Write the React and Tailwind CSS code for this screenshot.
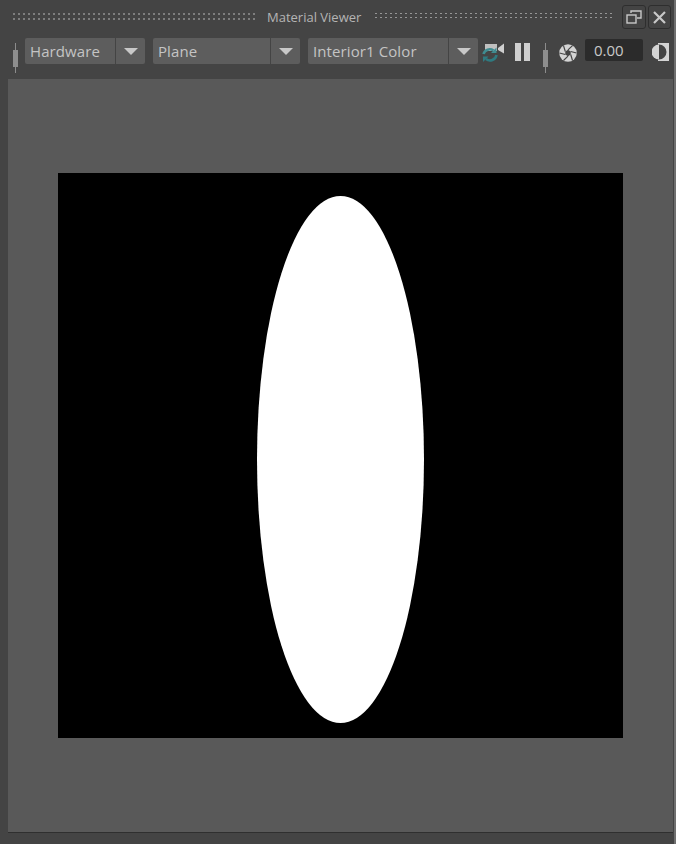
const font = 'font-["Open_Sans","Noto_Sans",sans-serif]';

function Grip({ dots, className }) {
  return (
    <div className={`flex flex-col ${className}`}>
      <div className={`${dots} bg-[length:5px_100%]`} />
      <div className={`${dots} mt-[3px] bg-[length:5px_100%]`} />
    </div>
  );
}

function Separator({ className }) {
  return (
    <div className={`relative h-[30px] w-[5px] shrink-0 ${className}`}>
      <div className="absolute left-[2px] top-0 h-full w-px bg-[#8c8c8c]" />
      <div className="absolute left-0 top-[7px] h-[17px] w-[5px] bg-[#8e8e8e]" />
    </div>
  );
}

function Combo({ label, mainWidth, className }) {
  return (
    <div className={`flex h-[26px] shrink-0 overflow-hidden rounded-[2px] ${className}`}>
      <div className={`flex items-center bg-[#5d5d5d] pl-[5px] pt-px text-[15px] tracking-[0.1px] whitespace-nowrap text-[#c4c4c4] ${mainWidth}`}>{label}</div>
      <div className="ml-px flex w-[29px] items-center justify-center bg-[#5d5d5d]">
        <svg width="14" height="7" viewBox="0 0 14 7">
          <path d="M0 0H14L7 7Z" fill="#c8c8c8" />
        </svg>
      </div>
    </div>
  );
}

function WindowButton({ children, className }) {
  return (
    <button className={`flex h-[24px] items-center justify-center rounded-[3px] border border-[#2e2e2e] ${className}`}>
      {children}
    </button>
  );
}

export default function App() {
  return (
    <div className={`flex h-[844px] w-[676px] flex-col overflow-hidden border-r-2 border-r-[#6f6f6f] bg-[#444444] ${font}`}>
      <div className="flex h-[34px] shrink-0 items-start">
        <Grip
          dots="h-[2px] bg-[linear-gradient(90deg,#7e7e7e_2px,transparent_2px)]"
          className="ml-[13px] mt-[13px] w-[243px]"
        />
        <div className="ml-[11px] mt-[8px] w-[95px] text-[13px] leading-[18px] whitespace-nowrap text-[#b4b4b4]">Material Viewer</div>
        <Grip
          dots="h-px bg-[linear-gradient(90deg,#969696_2px,transparent_2px)]"
          className="ml-[13px] mt-[13px] w-[237px]"
        />
        <WindowButton className="ml-[10px] mt-[5px] w-[24px]">
          <svg width="16" height="14" viewBox="0 0 16 14" fill="none" stroke="#c8c8c8" strokeWidth="1.4">
            <path d="M5 3V1H15V8H11" />
            <rect x="1" y="5" width="9" height="8" />
          </svg>
        </WindowButton>
        <WindowButton className="ml-[2px] mt-[5px] w-[23px]">
          <svg width="13" height="13" viewBox="0 0 13 13" stroke="#c8c8c8" strokeWidth="2.2">
            <path d="M1 1L12 12M12 1L1 12" />
          </svg>
        </WindowButton>
      </div>

      <div className="flex h-[45px] shrink-0 items-start pt-[4px]">
        <Separator className="ml-[13px] mt-[5px]" />
        <Combo label="Hardware" mainWidth="w-[90px]" className="ml-[7px]" />
        <Combo label="Plane" mainWidth="w-[117px]" className="ml-[8px]" />
        <Combo label="Interior1 Color" mainWidth="w-[140px]" className="ml-[8px]" />
        <svg className="ml-[3px] mt-[4px] shrink-0" width="24" height="21" viewBox="0 0 24 21" fill="none">
          <path d="M4 2H16V9H4Z" fill="#c0c0c0" />
          <path d="M17 6L23 1.500V11.500L17 8Z" fill="#cfcfcf" />
          <path d="M2.500 12A6.500 6.500 0 0 1 12.500 8.500" stroke="#3f8c91" strokeWidth="2.600" />
          <path d="M15.500 13A6.500 6.500 0 0 1 5 17" stroke="#2f7a80" strokeWidth="2.600" />
          <path d="M15.500 5.500V11H10Z" fill="#3f8c91" />
          <path d="M2 20V14.500H7.500Z" fill="#2f7a80" />
        </svg>
        <div className="ml-[10px] mt-[5px] flex shrink-0 gap-[3px]">
          <div className="h-[18px] w-[6px] bg-[#cfcfcf]" />
          <div className="h-[18px] w-[6px] bg-[#cfcfcf]" />
        </div>
        <Separator className="ml-[13px] mt-[5px]" />
        <svg className="ml-[11px] mt-[6px] shrink-0" width="18" height="18" viewBox="0 0 20 20">
          <circle cx="10" cy="10" r="9.800" fill="#d4d4d4" />
          <path d="M10 6.500L13 8.300V11.700L10 13.500L7 11.700V8.300Z" fill="#444444" />
          <path d="M10 6.500L15 1.800M13 8.300L19.500 10M13 11.700L15 18.300M10 13.500L5 18.300M7 11.700L0.500 10M7 8.300L5 1.800" stroke="#444444" strokeWidth="1.300" />
        </svg>
        <div className="ml-[8px] mt-px flex h-[22px] w-[58px] shrink-0 items-center rounded-[2px] bg-[#2b2b2b] pl-[9px] pt-px text-[15px] text-[#c8c8c8]">
          0.00
        </div>
        <svg className="ml-[9px] mt-[5px] shrink-0" width="17" height="18" viewBox="0 0 17 18">
          <path d="M6 0H17V18H6V16.500H7A7.500 7.500 0 0 0 7 1.500H6Z" fill="#d4d4d4" />
          <path d="M7 1.500A7.500 7.500 0 0 0 7 16.500Z" fill="#d4d4d4" />
        </svg>
      </div>

      <div className="ml-[8px] mr-px flex h-[754px] shrink-0 items-start justify-center border-b border-b-[#2f2f2f] bg-[#595959] pt-[94px]">
        <div className="flex h-[565px] w-[565px] shrink-0 items-start justify-center bg-black pt-[23px]">
          <div className="h-[527px] w-[167px] rounded-[50%] bg-white" />
        </div>
      </div>
    </div>
  );
}
